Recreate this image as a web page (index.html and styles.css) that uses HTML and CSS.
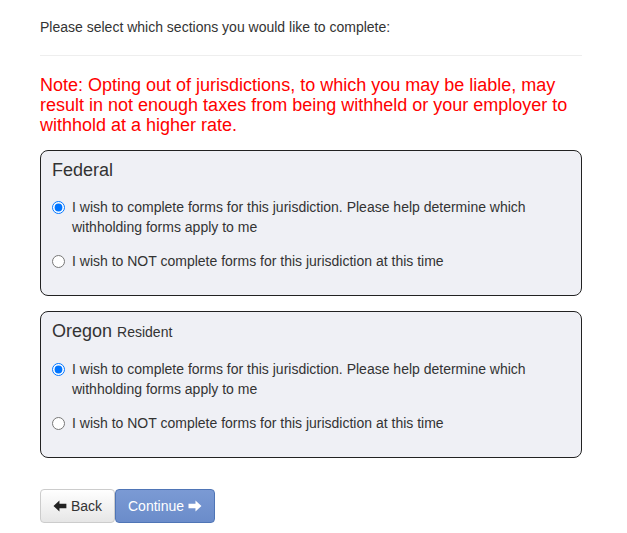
FILE: index.html
```html
<!DOCTYPE html>
<html>
<head>
<meta charset="utf-8">
<link rel="stylesheet" href="styles.css">
</head>
<body>
<div class="page">
  <p class="intro">Please select which sections you would like to complete:</p>
  <hr class="rule">
  <p class="note">Note: Opting out of jurisdictions, to which you may be liable, may result in not enough taxes from being withheld or your employer to withhold at a higher rate.</p>

  <div class="panel">
    <h3 class="panel-title">Federal</h3>
    <label class="radio first">
      <input type="radio" name="fed" checked>
      <span>I wish to complete forms for this jurisdiction. Please help determine which withholding forms apply to me</span>
    </label>
    <label class="radio">
      <input type="radio" name="fed">
      <span>I wish to NOT complete forms for this jurisdiction at this time</span>
    </label>
  </div>

  <div class="panel">
    <h3 class="panel-title">Oregon <small>Resident</small></h3>
    <label class="radio first">
      <input type="radio" name="or" checked>
      <span>I wish to complete forms for this jurisdiction. Please help determine which withholding forms apply to me</span>
    </label>
    <label class="radio">
      <input type="radio" name="or">
      <span>I wish to NOT complete forms for this jurisdiction at this time</span>
    </label>
  </div>

  <div class="actions">
    <button class="btn btn-back" type="button"><svg class="ico" viewBox="0 0 14 14" width="14" height="14"><path d="M0.5 7 L6.5 1.5 L6.5 4.8 L13.5 4.8 L13.5 9.2 L6.5 9.2 L6.5 12.5 Z" fill="#222"/></svg> Back</button><button class="btn btn-continue" type="button">Continue <svg class="ico" viewBox="0 0 14 14" width="14" height="14"><path d="M13.5 7 L7.5 1.5 L7.5 4.8 L0.5 4.8 L0.5 9.2 L7.5 9.2 L7.5 12.5 Z" fill="#fff"/></svg></button>
  </div>
</div>
</body>
</html>
```

FILE: styles.css
```css
html, body {
  margin: 0;
  padding: 0;
  background: #fff;
}
body {
  font-family: "Liberation Sans", Arial, Helvetica, sans-serif;
  font-size: 14px;
  line-height: 20px;
  color: #333;
}
.page {
  width: 542px;
  padding: 17px 0 0 40px;
}
.intro {
  margin: 0;
}
.rule {
  border: 0;
  border-top: 1px solid #eee;
  margin: 18px 0 19px;
  height: 0;
}
.note {
  margin: 0 0 15px;
  color: #f00;
  font-size: 18px;
  line-height: 20px;
}
.panel {
  background: #eff0f5;
  border: 1px solid #222;
  border-radius: 8px;
  padding: 9px 12px 24px 11px;
  margin-bottom: 15px;
}
.panel-title {
  margin: 0;
  font-size: 18px;
  line-height: 20px;
  font-weight: normal;
  color: #333;
}
.panel-title small {
  font-size: 14px;
}
.radio {
  display: flex;
  align-items: flex-start;
  margin-top: 14px;
}
.radio.first {
  margin-top: 17px;
}
.radio input {
  width: 13px;
  height: 13px;
  margin: 4px 7px 0 0;
  flex: none;
}
.actions {
  display: flex;
  margin-top: 31px;
}
.btn {
  font-family: inherit;
  font-size: 14px;
  line-height: 20px;
  padding: 6px 12px;
  border-radius: 4px;
  border: 1px solid #ccc;
  display: inline-flex;
  align-items: center;
  gap: 4px;
  cursor: pointer;
}
.ico {
  display: block;
}
.btn-back {
  color: #333;
  background: linear-gradient(#fff, #e6e6e6);
  border-color: #ccc;
  width: 75px;
  justify-content: center;
}
.btn-continue {
  color: #fff;
  background: linear-gradient(#7b9ad4, #6b8cca);
  border-color: #4f75b6;
  width: 100px;
  justify-content: center;
}
```
